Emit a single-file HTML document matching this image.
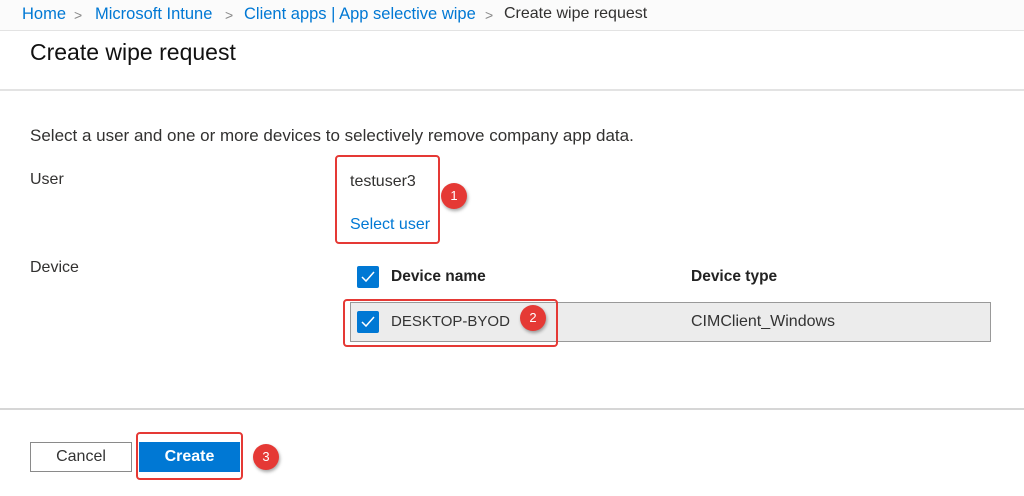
<!DOCTYPE html>
<html><head><style>
*{margin:0;padding:0;box-sizing:border-box}
body{width:1024px;height:496px;background:#fff;font-family:"Liberation Sans",sans-serif;position:relative;overflow:hidden;color:#323130}
.a{position:absolute;white-space:nowrap}
.bc{color:#0078d4;font-size:16.5px}
.sep{color:#888;font-size:14px}
.cb{position:absolute;width:22px;height:22px;background:#0078d4;border-radius:2px}
.cb svg{position:absolute;left:3px;top:4px}
.red{position:absolute;border:2px solid #e53935;border-radius:4px}
.badge{position:absolute;width:26px;height:26px;border-radius:50%;background:#e53935;color:#fff;font-size:13px;text-align:center;line-height:26px;box-shadow:1px 2px 3px rgba(0,0,0,.35)}
</style></head><body>
<div class="a" style="left:0;top:0;width:1024px;height:31px;background:#fbfbfb;border-bottom:1px solid #e3e3e3"></div>
<div class="a bc" style="left:22px;top:5px">Home</div>
<div class="a sep" style="left:74px;top:7px">&gt;</div>
<div class="a bc" style="left:95px;top:5px">Microsoft Intune</div>
<div class="a sep" style="left:225px;top:7px">&gt;</div>
<div class="a bc" style="left:244px;top:5px">Client apps | App selective wipe</div>
<div class="a sep" style="left:485px;top:7px">&gt;</div>
<div class="a" style="left:504px;top:5px;font-size:16px;color:#323130">Create wipe request</div>
<div class="a" style="left:30px;top:39px;font-size:23px;color:#111">Create wipe request</div>
<div class="a" style="left:0;top:89px;width:1024px;height:2px;background:#e3e3e3"></div>
<div class="a" style="left:30px;top:126px;font-size:17px">Select a user and one or more devices to selectively remove company app data.</div>
<div class="a" style="left:30px;top:171px;font-size:16px">User</div>
<div class="a" style="left:30px;top:259px;font-size:16px">Device</div>
<div class="a" style="left:350px;top:173px;font-size:16px">testuser3</div>
<div class="a" style="left:350px;top:216px;font-size:16px;color:#0078d4">Select user</div>
<div class="red" style="left:335px;top:155px;width:105px;height:89px"></div>
<div class="badge" style="left:441px;top:183px">1</div>
<div class="cb" style="left:357px;top:266px"><svg width="16" height="14" viewBox="0 0 16 14"><path d="M2 7l4 4 8-9" stroke="#fff" stroke-width="1.5" fill="none"/></svg></div>
<div class="a" style="left:391px;top:268px;font-size:15.5px;font-weight:bold;color:#222">Device name</div>
<div class="a" style="left:691px;top:268px;font-size:15.5px;font-weight:bold;color:#222">Device type</div>
<div class="a" style="left:350px;top:302px;width:641px;height:40px;background:#ececec;border:1px solid #999"></div>
<div class="cb" style="left:357px;top:311px"><svg width="16" height="14" viewBox="0 0 16 14"><path d="M2 7l4 4 8-9" stroke="#fff" stroke-width="1.5" fill="none"/></svg></div>
<div class="a" style="left:391px;top:313px;font-size:15px;color:#333">DESKTOP-BYOD</div>
<div class="a" style="left:691px;top:313px;font-size:16px;color:#333">CIMClient_Windows</div>
<div class="red" style="left:343px;top:299px;width:215px;height:48px"></div>
<div class="badge" style="left:520px;top:305px">2</div>
<div class="a" style="left:0;top:408px;width:1024px;height:2px;background:#d6d6d6"></div>
<div class="a" style="left:30px;top:442px;width:102px;height:30px;border:1px solid #8a8a8a;font-size:16px;text-align:center;line-height:28px;color:#333">Cancel</div>
<div class="a" style="left:139px;top:442px;width:101px;height:30px;background:#0078d4;font-size:16px;font-weight:bold;color:#fff;text-align:center;line-height:30px">Create</div>
<div class="red" style="left:136px;top:432px;width:107px;height:48px"></div>
<div class="badge" style="left:253px;top:444px">3</div>
</body></html>
